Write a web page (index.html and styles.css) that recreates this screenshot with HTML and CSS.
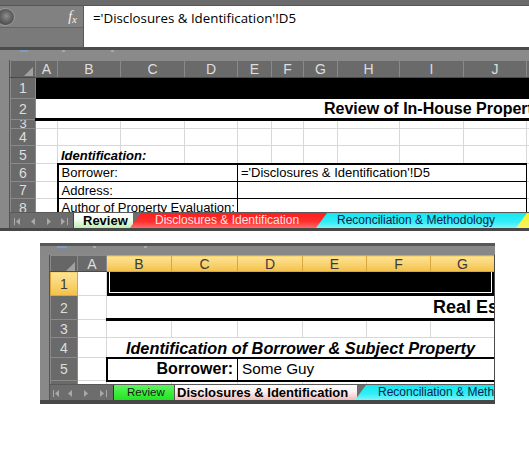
FILE: index.html
```html
<!DOCTYPE html>
<html lang="en">
<head>
<meta charset="utf-8">
<title>Excel sheets</title>
<link rel="stylesheet" href="styles.css">
</head>
<body>
<div class="win w1">
  <div class="strip"></div>
  <div class="fbar">
    <div class="fleft">
      <div class="fl-top"><span class="namebox"></span><span class="fx">f<span class="fxx">x</span></span></div>
      <div class="fl-bot"></div>
    </div>
    <div class="finput">='Disclosures &amp; Identification'!D5</div>
  </div>
  <div class="ribbon"><span class="rico"></span><span class="rdot d1"></span><span class="rdot d2"></span></div>
  <div class="body">
    <div class="lframe"></div>
    <div class="main m1">
      <div class="sheet s1">
        <table>
          <colgroup>
            <col class="c-h"><col class="c-a"><col class="c-b"><col class="c-c"><col class="c-d"><col class="c-e"><col class="c-f"><col class="c-g"><col class="c-hh"><col class="c-i"><col class="c-j"><col class="c-k">
          </colgroup>
          <tr class="hdr"><th class="corner"><span class="tri"></span></th><th>A</th><th>B</th><th>C</th><th>D</th><th>E</th><th>F</th><th>G</th><th>H</th><th>I</th><th>J</th><th></th></tr>
          <tr class="r1"><th>1</th><td class="blk" colspan="11"></td></tr>
          <tr class="r2"><th>2</th><td class="title" colspan="11">Review of In-House Property Evaluation</td></tr>
          <tr class="r3"><th><span class="clip3">3</span></th><td></td><td></td><td></td><td></td><td></td><td></td><td></td><td></td><td></td><td></td><td></td></tr>
          <tr class="r4"><th>4</th><td></td><td></td><td></td><td></td><td></td><td></td><td></td><td></td><td></td><td></td><td></td></tr>
          <tr class="r5"><th>5</th><td></td><td class="sec">Identification:</td><td></td><td></td><td></td><td></td><td></td><td></td><td></td><td></td><td></td></tr>
          <tr class="r6"><th>6</th><td></td><td class="lbl" colspan="3">Borrower:</td><td class="val" colspan="6">='Disclosures &amp; Identification'!D5</td><td class="k"></td></tr>
          <tr class="r7"><th>7</th><td></td><td class="lbl" colspan="3">Address:</td><td class="val" colspan="6"></td><td class="k"></td></tr>
          <tr class="r8"><th>8</th><td></td><td class="lbl" colspan="3">Author of Property Evaluation:</td><td class="val" colspan="6"></td><td class="k"></td></tr>
        </table>
      </div>
      <div class="tabbar tb1">
        <svg class="nav" width="63" height="16" viewBox="0 0 63 16"><g fill="#a9a9a9"><rect x="4" y="5" width="1" height="7"/><polygon points="10,5 6,8.5 10,12"/><polygon points="25,5 21,8.5 25,12"/><polygon points="37,5 41,8.5 37,12"/><polygon points="51,5 55,8.5 51,12"/><rect x="57" y="5" width="1" height="7"/></g></svg>
        <div class="tab act1">Review</div>
        <div class="tab red">Disclosures &amp; Identification</div>
        <div class="tab cyan c1">Reconciliation &amp; Methodology</div>
        <div class="tab yellow">Summary</div>
      </div>
    </div>
  </div>
  <div class="bband"></div>
</div>

<div class="win w2">
  <div class="strip2"></div>
  <div class="ribbon2"><span class="rico2"></span><span class="rdot e1"></span><span class="rdot e2"></span></div>
  <div class="body">
    <div class="lframe"></div>
    <div class="main m2">
      <div class="sheet s2">
        <table>
          <colgroup>
            <col class="c-h"><col class="c-a"><col class="c-b"><col class="c-c"><col class="c-d"><col class="c-e"><col class="c-f"><col class="c-g">
          </colgroup>
          <tr class="hdr"><th class="corner"><span class="tri"></span></th><th>A</th><th class="hl">B</th><th class="hl">C</th><th class="hl">D</th><th class="hl">E</th><th class="hl">F</th><th class="hl">G</th></tr>
          <tr class="q1"><th class="hl">1</th><td></td><td class="selc" colspan="6"><div class="selbox"></div></td></tr>
          <tr class="q2"><th>2</th><td></td><td class="title2" colspan="6">Real Estate Evaluation Review</td></tr>
          <tr class="q3"><th>3</th><td></td><td></td><td></td><td></td><td></td><td></td><td></td></tr>
          <tr class="q4"><th>4</th><td></td><td class="sub" colspan="6">Identification of Borrower &amp; Subject Property</td></tr>
          <tr class="q5"><th>5</th><td></td><td class="blab" colspan="2">Borrower:</td><td class="bval" colspan="4">Some Guy</td></tr>
          <tr class="q6"><th>6</th><td></td><td></td><td></td><td></td><td></td><td></td><td></td></tr>
        </table>
      </div>
      <div class="tabbar tb2">
        <svg class="nav" width="63" height="16" viewBox="0 0 63 16"><g fill="#a9a9a9"><rect x="3" y="5" width="1" height="7"/><polygon points="9,5 5,8.5 9,12"/><polygon points="22,5 18,8.5 22,12"/><polygon points="34,5 38,8.5 34,12"/><polygon points="50,5 54,8.5 50,12"/><rect x="56" y="5" width="1" height="7"/></g></svg>
        <div class="tab green">Review</div>
        <div class="tab act2">Disclosures &amp; Identification</div>
        <div class="tab cyan c2">Reconciliation &amp; Methodology</div>
      </div>
    </div>
  </div>
  <div class="bband b2"></div>
</div>
</body>
</html>
```
FILE: styles.css
```css
* { box-sizing: border-box; }
html, body { margin: 0; padding: 0; background: #fff; }
body {
  width: 529px;
  height: 462px;
  overflow: hidden;
  font-family: "Liberation Sans", Arial, sans-serif;
  color: #000;
}

/* ---------- window 1 ---------- */
.w1 { width: 529px; }
.strip { height: 6px; background: #6b6b6b; border-bottom: 1px solid #565656; }
.fbar { display: flex; height: 41px; }
.fleft {
  width: 84px;
  display: flex;
  flex-direction: column;
  background: #7a7a7a;
  border-right: 1px solid #585858;
}
.fl-top {
  height: 22px;
  display: flex;
  align-items: center;
  justify-content: space-between;
  padding-right: 6px;
  background: #818181;
  border-bottom: 1px solid #666;
}
.namebox {
  width: 19px;
  height: 18px;
  margin-left: -4px;
  border-radius: 50%;
  background: radial-gradient(circle at 55% 45%, #8f8f8f 0, #6a6a6a 35%, #4c4c4c 70%);
  border: 1px solid #9a9a9a;
}
.fx {
  font-family: "Liberation Serif", serif;
  font-style: italic;
  color: #f2f2f2;
  font-size: 14px;
  line-height: 14px;
}
.fxx { font-size: 11px; position: relative; top: 2px; }
.fl-bot { flex: 1; background: #7a7a7a; }
.finput {
  flex: 1;
  background: #fff;
  padding: 3px 0 0 9px;
  font-family: "Open Sans", sans-serif;
  font-size: 13.3px;
  line-height: 18px;
  white-space: nowrap;
  overflow: hidden;
}
.ribbon {
  height: 13px;
  background: #8a8a8a;
  border-top: 3px solid #4c4c4c;
  display: flex;
  gap: 6px;
  padding-left: 20px;
}
.rico { width: 8px; height: 2px; background: #7d9ccc; }
.rdot { width: 3px; height: 2px; background: #a8a8a8; }
.d1 { margin-left: 28px; }
.d2 { margin-left: 40px; }

.body { display: flex; }
.lframe { width: 10px; flex: none; background: #898989; border-right: 1px solid #555; }
.main { display: flex; flex-direction: column; }
.m1 { width: 519px; }
.sheet { overflow: hidden; }
.s1 { height: 152px; }

table {
  border-collapse: collapse;
  table-layout: fixed;
}
.s1 table { width: 519px; }
.s1 .c-h { width: 25px; }
.s1 .c-a { width: 22px; }
.s1 .c-b { width: 63px; }
.s1 .c-c { width: 64px; }
.s1 .c-d { width: 53px; }
.s1 .c-e { width: 34px; }
.s1 .c-f { width: 32px; }
.s1 .c-g { width: 34px; }
.s1 .c-hh { width: 62px; }
.s1 .c-i { width: 64px; }
.s1 .c-j { width: 63px; }
.s1 .c-k { width: 3px; }

th {
  background: #6a6a6a;
  color: #dedede;
  font-weight: normal;
  font-size: 14px;
  line-height: 14px;
  padding: 0;
  border: 1px solid #8a8a8a;
  text-align: center;
  overflow: hidden;
  white-space: nowrap;
}
.hdr th { border-bottom-color: #4a4a4a; }
th.corner { background: #666; }
.tri {
  display: block;
  width: 0;
  height: 0;
  margin: 5px 2px 0 auto;
  border-left: 9px solid transparent;
  border-bottom: 9px solid #a0a0a0;
}
td {
  border: 1px solid #d8d8d8;
  padding: 0 3px;
  white-space: nowrap;
  font-size: 13px;
  line-height: 15px;
  vertical-align: bottom;
}

.s1 .hdr { height: 17px; }
.r1 { height: 21px; }
.r2 { height: 21px; }
.r3 { height: 9px; }
.r3 th { line-height: 8px; vertical-align: bottom; }
.clip3 { display: block; height: 8px; overflow: hidden; line-height: 8px; font-size: 13px; }
.r4 { height: 17px; }
.r5 { height: 18px; }
.r6 { height: 18px; }
.r7 { height: 17px; }
.r8 { height: 18px; }

.blk { background: #000; border-color: #000; }
.title {
  font-weight: bold;
  font-size: 16px;
  line-height: 18px;
  padding-left: 288px;
  border-bottom: 3px solid #000;
  overflow: hidden;
}
.sec { font-weight: bold; font-style: italic; }
.lbl {
  border: 1px solid #000;
  border-left: 2px solid #000;
  vertical-align: middle;
}
.val { border: 1px solid #000; vertical-align: middle; }
.r6 .lbl, .r6 .val { border-top: 2px solid #000; }
.k { border-left: 0; }

/* ---------- tab bars ---------- */
.tabbar {
  display: flex;
  height: 16px;
  background: #6d6d6d;
  overflow: hidden;
  border-top: 1px solid #5a5a5a;
}
.nav { flex: none; }
.tab {
  flex: none;
  font-size: 12px;
  line-height: 15px;
  white-space: nowrap;
  overflow: hidden;
  clip-path: polygon(11px 0, 100% 0, 100% 100%, 0 100%);
}
.act1 {
  width: 60px;
  padding-left: 9px;
  font-weight: bold;
  font-size: 13px;
  background: linear-gradient(#ffffff 0%, #f2fff0 45%, #bdeeb2 100%);
  border-left: 1px solid #444;
  clip-path: none;
}
.red {
  width: 197px;
  margin-left: -3px;
  padding-left: 25px;
  background: linear-gradient(#ff1e1e 0%, #ff2d2d 55%, #ff6b6b 100%);
  color: #ffe4e4;
}
.cyan {
  background: linear-gradient(#14e6f2 0%, #33eef6 60%, #7cf5fa 100%);
  color: #0f1e4a;
}
.c1 { width: 211px; margin-left: -11px; padding-left: 21px; }
.yellow {
  width: 80px;
  margin-left: -11px;
  padding-left: 24px;
  background: linear-gradient(#f6ef1c, #f8f46a);
}
.bband { height: 3px; background: #474747; }

/* ---------- window 2 ---------- */
.w2 { width: 455px; margin: 12px 0 0 40px; }
.strip2 { height: 3px; background: #585858; }
.ribbon2 {
  height: 9px;
  background: #888;
  display: flex;
  gap: 6px;
  padding-left: 17px;
}
.rico2 { width: 10px; height: 2px; background: #7d9ccc; }
.e1 { margin-left: 20px; }
.e2 { margin-left: 42px; }
.m2 { width: 445px; border-right: 1px solid #4a4a4a; }
.s2 { height: 129px; }
.s2 table { width: 444px; }
.s2 .c-h { width: 27px; }
.s2 .c-a { width: 29px; }
.s2 .c-b { width: 65px; }
.s2 .c-c { width: 66px; }
.s2 .c-d { width: 65px; }
.s2 .c-e { width: 64px; }
.s2 .c-f { width: 64px; }
.s2 .c-g { width: 64px; }

.s2 .hdr { height: 16px; }
th.hl {
  background: linear-gradient(#fde497 0%, #f9d371 50%, #f3c14a 100%);
  color: #3a3a3a;
  border-color: #d9a640;
}
.q1 { height: 24px; }
.q2 { height: 24px; }
.q3 { height: 18px; }
.q4 { height: 20px; }
.q5 { height: 23px; }
.q6 { height: 18px; }

.selc { padding: 0; border-color: #000; }
.selbox {
  height: 23px;
  background: #000;
  border: 2px solid #000;
  border-top: 0;
  box-shadow: inset 1px -1px 0 #fff, inset -1px 0 0 #fff;
}
.title2 {
  font-weight: bold;
  font-size: 18px;
  line-height: 21px;
  padding-left: 326px;
  border-bottom: 3px solid #000;
  overflow: hidden;
}
.sub {
  text-align: center;
  font-weight: bold;
  font-style: italic;
  font-size: 16.3px;
  line-height: 18px;
}
.blab {
  text-align: right;
  font-weight: bold;
  font-size: 16px;
  line-height: 18px;
  padding-right: 4px;
  vertical-align: middle;
  border: 2px solid #000;
  border-right: 1px solid #000;
}
.bval {
  font-size: 15.3px;
  line-height: 18px;
  padding-left: 4px;
  vertical-align: middle;
  border: 2px solid #000;
  border-left: 1px solid #000;
}

.green {
  width: 62px;
  padding-left: 13px;
  font-size: 11.5px;
  background: linear-gradient(#5cf55c, #22e422);
  color: #1c1c1c;
  border-left: 1px solid #333;
  border-right: 1px solid #555;
  clip-path: none;
}
.act2 {
  width: 182px;
  padding-left: 2px;
  font-weight: bold;
  font-size: 13px;
  background: linear-gradient(#ffffff 0%, #fdf1f1 45%, #f0bcbc 100%);
  clip-path: none;
}
.c2 { width: 150px; margin-left: -2px; padding-left: 23px; }
.b2 { height: 4px; }
```
